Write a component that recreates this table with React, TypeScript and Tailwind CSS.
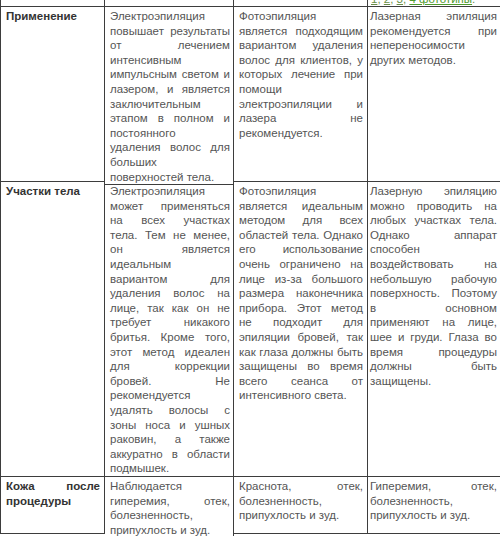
import React from "react";

type Cell = { lines: string[]; bold?: boolean; pl?: string };

const rows: { h: string; cells: Cell[] }[] = [
  {
    h: "h-[175px]",
    cells: [
      { lines: ["Применение"], bold: true },
      {
        lines: [
          "Электроэпиляция",
          "повышает результаты",
          "от лечением",
          "интенсивным",
          "импульсным светом и",
          "лазером, и является",
          "заключительным",
          "этапом в полном и",
          "постоянного",
          "удаления волос для",
          "больших",
          "поверхностей тела.",
        ],
      },
      {
        lines: [
          "Фотоэпиляция",
          "является подходящим",
          "вариантом удаления",
          "волос для клиентов, у",
          "которых лечение при",
          "помощи",
          "электроэпиляции и",
          "лазера не",
          "рекомендуется.",
        ],
      },
      {
        lines: ["Лазерная эпиляция", "рекомендуется при", "непереносимости", "других методов."],
      },
    ],
  },
  {
    h: "h-[295px]",
    cells: [
      { lines: ["Участки тела"], bold: true },
      {
        lines: [
          "Электроэпиляция",
          "может применяться",
          "на всех участках",
          "тела. Тем не менее,",
          "он является",
          "идеальным",
          "вариантом для",
          "удаления волос на",
          "лице, так как он не",
          "требует никакого",
          "бритья. Кроме того,",
          "этот метод идеален",
          "для коррекции",
          "бровей. Не",
          "рекомендуется",
          "удалять волосы с",
          "зоны носа и ушных",
          "раковин, а также",
          "аккуратно в области",
          "подмышек.",
        ],
      },
      {
        lines: [
          "Фотоэпиляция",
          "является идеальным",
          "методом для всех",
          "областей тела. Однако",
          "его использование",
          "очень ограничено на",
          "лице из-за большого",
          "размера наконечника",
          "прибора. Этот метод",
          "не подходит для",
          "эпиляции бровей, так",
          "как глаза должны быть",
          "защищены во время",
          "всего сеанса от",
          "интенсивного света.",
        ],
      },
      {
        lines: [
          "Лазерную эпиляцию",
          "можно проводить на",
          "любых участках тела.",
          "Однако аппарат",
          "способен",
          "воздействовать на",
          "небольшую рабочую",
          "поверхность. Поэтому",
          "в основном",
          "применяют на лице,",
          "шее и груди. Глаза во",
          "время процедуры",
          "должны быть",
          "защищены.",
        ],
      },
    ],
  },
  {
    h: "h-[57px]",
    cells: [
      { lines: ["Кожа после", "процедуры"], bold: true },
      { lines: ["Наблюдается", "гиперемия, отек,", "болезненность,", "припухлость и зуд."] },
      { lines: ["Краснота, отек,", "болезненность,", "припухлость и зуд."] },
      { lines: ["Гиперемия, отек,", "болезненность,", "припухлость и зуд."] },
    ],
  },
];

const pads = ["pl-[5px] pr-[4px]", "pl-[5px] pr-[3px]", "pl-[5px] pr-[4px]", "pl-[2px] pr-[3px]"];
const borders = ["border-r", "border-r", "border-r", ""];

function CellView({ cell, idx }: { cell: Cell; idx: number }) {
  return (
    <div
      className={`${borders[idx]} border-b border-[#3d3d3d] ${pads[idx]} pt-[2px] ${
        cell.bold ? "font-bold text-[#333333]" : "text-[#555555]"
      }`}
    >
      {cell.lines.map((l, i) => (
        <div
          key={i}
          className={
            i === cell.lines.length - 1 ? "text-left" : "text-justify [text-align-last:justify]"
          }
        >
          {l}
        </div>
      ))}
    </div>
  );
}

export default function App() {
  return (
    <div
      className="w-[500px] h-[536px] overflow-hidden bg-white text-[11.5px] leading-[14.6px]"
      style={{ fontFamily: '"Liberation Sans", Arial, sans-serif' }}
    >
      <div className="grid grid-cols-[104px_129px_134px_132px] border-l border-[#3d3d3d]">
        {/* clipped previous row */}
        <div className="h-[7px] border-r border-b border-[#3d3d3d]" />
        <div className="h-[7px] border-r border-b border-[#3d3d3d]" />
        <div className="h-[7px] border-r border-b border-[#3d3d3d]" />
        <div className="h-[7px] border-b border-[#3d3d3d] overflow-hidden pl-[3px]">
          <div className="mt-[-8px] whitespace-nowrap text-[#6b8f4a]">
            <span className="underline">1</span>
            <span>, </span>
            <span className="underline">2</span>
            <span>, </span>
            <span className="underline">3</span>
            <span>, </span>
            <span className="underline text-[#4f9a2c]">4 фототипы</span>
            <span>.</span>
          </div>
        </div>
        {rows.map((r, ri) =>
          r.cells.map((c, ci) => (
            <div key={`${ri}-${ci}`} className={`${r.h} grid`}>
              <CellView cell={c} idx={ci} />
            </div>
          ))
        )}
      </div>
    </div>
  );
}
